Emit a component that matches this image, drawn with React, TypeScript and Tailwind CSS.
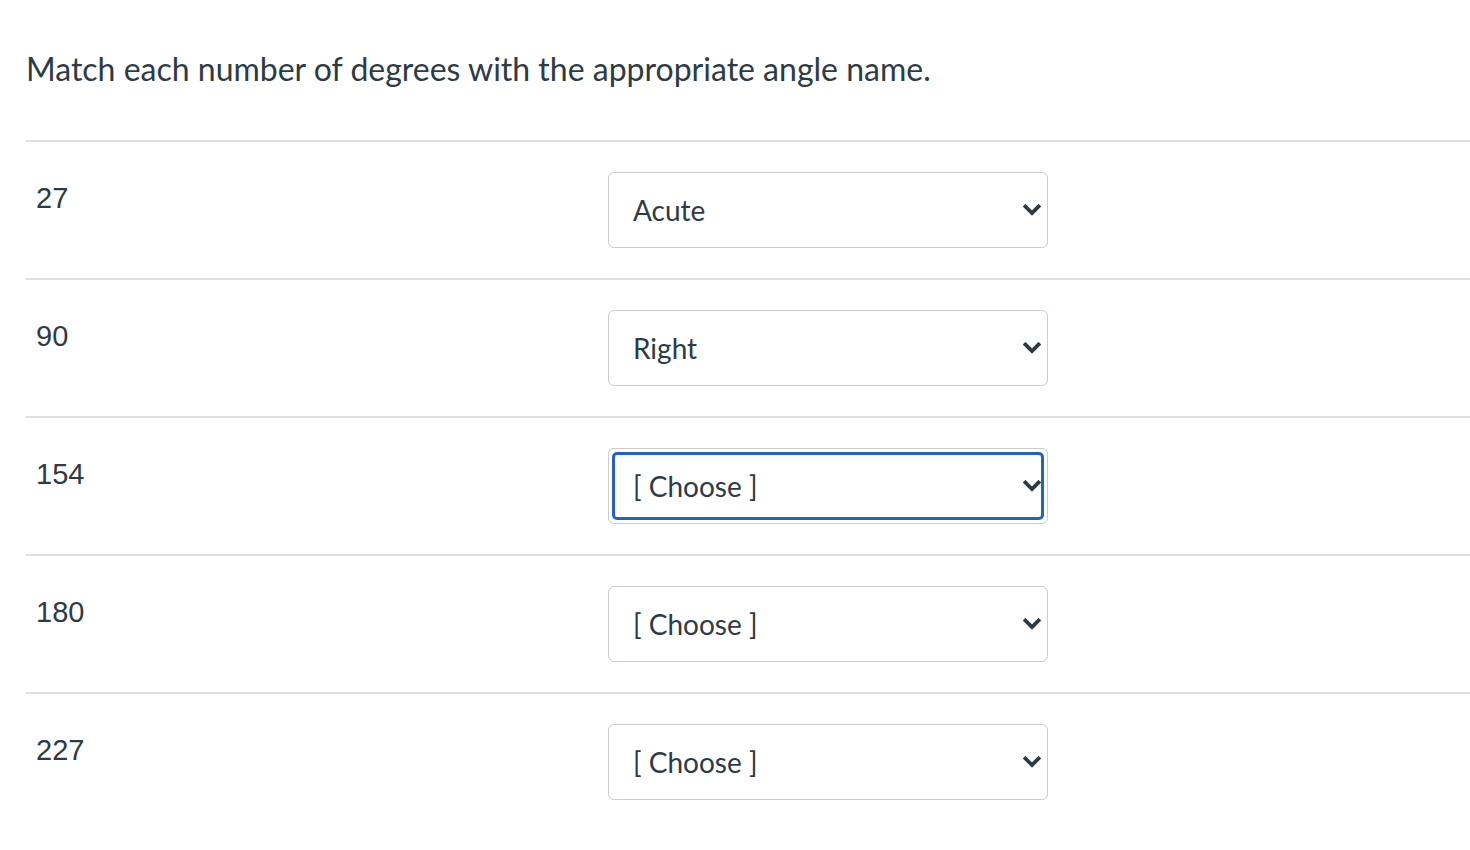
const rows = [
  { deg: '27', value: 'Acute' },
  { deg: '90', value: 'Right' },
  { deg: '154', value: '[ Choose ]', focused: true },
  { deg: '180', value: '[ Choose ]' },
  { deg: '227', value: '[ Choose ]' },
]

const Chevron = () => (
  <svg width="18" height="12" viewBox="0 0 18 12" className="pointer-events-none absolute right-[6px] top-1/2 -translate-y-1/2">
    <path d="M2.5 2.5 L9 9 L15.5 2.5" fill="none" stroke="#2d3b45" strokeWidth="3.8" strokeLinecap="square" />
  </svg>
)

const AngleSelect = ({ value, focused }: { value: string; focused?: boolean }) => (
  <div className="relative w-[440px] rounded-[6px] border border-[#c7cdd1] bg-white p-[3px]">
    <div
      className={
        focused
          ? 'flex h-[68px] items-center rounded-[5px] border-[3px] border-[#2560c8] pl-[18px]'
          : 'flex h-[68px] items-center rounded-[5px] border-[3px] border-transparent pl-[18px]'
      }
    >
      <span className="text-[28px] text-[#2d3b45]" style={{ fontFamily: 'Lato, sans-serif' }}>
        {value}
      </span>
    </div>
    <Chevron />
  </div>
)

export default function App() {
  return (
    <div className="min-h-screen bg-white pl-[26px] pt-[48px]">
      <h1 className="text-[32px] leading-[42px] text-[#2d3b45]" style={{ fontFamily: 'Lato, sans-serif' }}>
        Match each number of degrees with the appropriate angle name.
      </h1>
      <div className="mt-[50px]">
        {rows.map((r) => (
          <div key={r.deg} className="flex border-t-2 border-[#dfdfdf] py-[30px]">
            <div
              className="w-[582px] pl-[10px] pt-[10px] text-[29px] leading-[32px] text-[#2d3b45]"
              style={{ fontFamily: '"Liberation Sans", Arial, sans-serif' }}
            >
              {r.deg}
            </div>
            <AngleSelect value={r.value} focused={r.focused} />
          </div>
        ))}
      </div>
    </div>
  )
}
